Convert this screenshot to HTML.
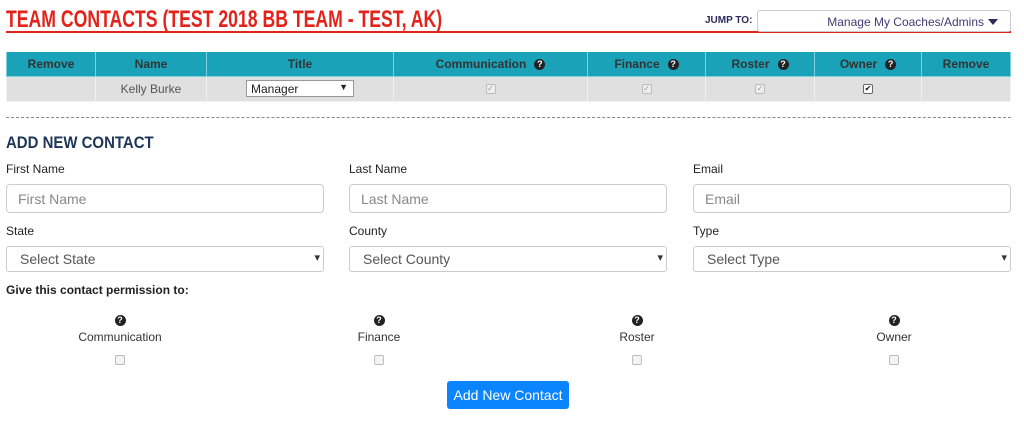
<!DOCTYPE html>
<html><head><style>
*{box-sizing:border-box;margin:0;padding:0}
body{width:1024px;height:424px;background:#fff;font-family:"Liberation Sans",Arial,sans-serif;position:relative;overflow:hidden;color:#333}
.abs{position:absolute}
h1{position:absolute;left:6px;top:6px;font-weight:bold;font-size:24px;color:#e3231b;white-space:nowrap;transform:scaleX(0.735);transform-origin:0 0}
.rl{left:6px;top:31px;width:1005px;height:2px;background:#e3231b}
.jt{left:705px;top:15px;font-size:10px;font-weight:bold;color:#2d2a5a}
.js{left:757px;top:10px;width:254px;height:22px;border:1px solid #ccc;border-radius:3px;font-size:12px;color:#3f3a73;text-align:right;padding:4px 26px 0 0;background:#fff}
.tri{position:absolute;right:12px;top:8px;border-left:5px solid transparent;border-right:5px solid transparent;border-top:6px solid #2d2a5a}
table{position:absolute;left:6px;top:52px;width:1005px;border-collapse:collapse;font-size:12px}
th{background:#19a2b8;color:#333;height:24px;font-weight:bold;border:1px solid #7fd0dc;border-top:none}
td{background:#e0e0e0;height:25px;text-align:center;border:1px solid #f2f2f2;color:#555}
.q{display:inline-block;width:11px;height:11px;border-radius:50%;background:#222;color:#fff;font-size:9px;line-height:11px;text-align:center;font-weight:bold;margin-left:8px;vertical-align:middle}
.cb{display:inline-block;width:10px;height:10px;border:1px solid #bbb;border-radius:2px;background:#eee;vertical-align:middle;font-size:8px;line-height:8px;color:#999}
.sel{display:inline-block;width:108px;height:17px;border:1px solid #999;background:#fff;text-align:left;font-size:12px;padding:1px 4px;position:relative;color:#222}
.dash{left:6px;top:117px;width:1005px;border-top:1px dashed #888}
h2{position:absolute;left:6px;top:133px;font-size:17px;color:#1d3656;font-weight:bold;transform:scaleX(0.88);transform-origin:0 0;white-space:nowrap}
.lb{font-size:12px;color:#222}
.in{height:29px;width:318px;border:1px solid #ccc;border-radius:4px;font-size:14px;color:#888;padding:6px 11px;background:#fff}
.sl{height:26px;width:318px;border:1px solid #ccc;border-radius:3px;font-size:14px;color:#555;padding:4px 13px;background:#fff}
.sl:after{content:"▾";position:absolute;right:3px;top:4px;font-size:11px;color:#333}
.perm{font-size:12px;font-weight:bold;left:6px;top:283px;color:#222}
.pc{position:absolute;width:120px;text-align:center;font-size:12px;color:#333;top:313px}
.pc .q{margin:0}
.btn{left:447px;top:381px;width:122px;height:28px;background:#0a84ff;border-radius:3px;color:#fff;font-size:14px;text-align:center;line-height:28px}
</style></head><body>
<h1>TEAM CONTACTS (TEST 2018 BB TEAM - TEST, AK)</h1>
<div class="abs rl"></div>
<div class="abs jt">JUMP TO:</div>
<div class="abs js">Manage My Coaches/Admins<span class="tri"></span></div>
<table>
<tr><th style="width:89px">Remove</th><th style="width:111px">Name</th><th style="width:187px">Title</th><th style="width:194px">Communication<span class="q">?</span></th><th style="width:118px">Finance<span class="q">?</span></th><th style="width:109px">Roster<span class="q">?</span></th><th style="width:107px">Owner<span class="q">?</span></th><th>Remove</th></tr>
<tr><td></td><td>Kelly Burke</td><td><span class="sel">Manager<span style="position:absolute;right:5px;top:1px;font-size:9px">▼</span></span></td><td><span class="cb">✓</span></td><td><span class="cb">✓</span></td><td><span class="cb">✓</span></td><td><span class="cb" style="background:#fff;border-color:#666;color:#111">✔</span></td><td></td></tr>
</table>
<div class="abs dash"></div>
<h2>ADD NEW CONTACT</h2>
<div class="abs lb" style="left:6px;top:162px">First Name</div>
<div class="abs lb" style="left:349px;top:162px">Last Name</div>
<div class="abs lb" style="left:693px;top:162px">Email</div>
<div class="abs in" style="left:6px;top:184px">First Name</div>
<div class="abs in" style="left:349px;top:184px">Last Name</div>
<div class="abs in" style="left:693px;top:184px">Email</div>
<div class="abs lb" style="left:6px;top:224px">State</div>
<div class="abs lb" style="left:349px;top:224px">County</div>
<div class="abs lb" style="left:693px;top:224px">Type</div>
<div class="abs sl" style="left:6px;top:246px">Select State</div>
<div class="abs sl" style="left:349px;top:246px">Select County</div>
<div class="abs sl" style="left:693px;top:246px">Select Type</div>
<div class="abs perm">Give this contact permission to:</div>
<div class="pc" style="left:60px"><span class="q">?</span><div style="margin-top:3px">Communication</div><div style="margin-top:8px"><span class="cb" style="background:#f4f4f4"></span></div></div>
<div class="pc" style="left:319px"><span class="q">?</span><div style="margin-top:3px">Finance</div><div style="margin-top:8px"><span class="cb" style="background:#f4f4f4"></span></div></div>
<div class="pc" style="left:577px"><span class="q">?</span><div style="margin-top:3px">Roster</div><div style="margin-top:8px"><span class="cb" style="background:#f4f4f4"></span></div></div>
<div class="pc" style="left:834px"><span class="q">?</span><div style="margin-top:3px">Owner</div><div style="margin-top:8px"><span class="cb" style="background:#f4f4f4"></span></div></div>
<div class="abs btn">Add New Contact</div>
</body></html>
